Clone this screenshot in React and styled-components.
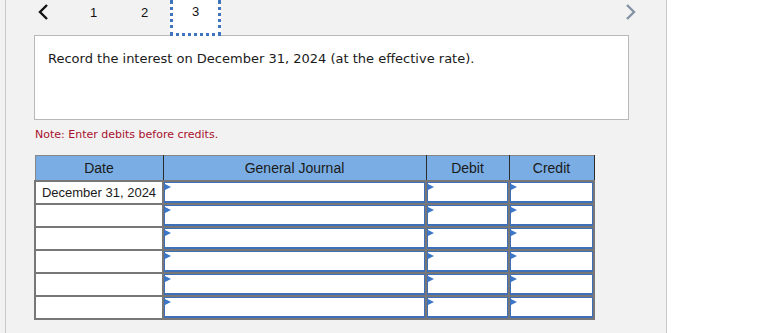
import React from "react";
import styled, { createGlobalStyle } from "styled-components";

const Global = createGlobalStyle`
  html, body {
    margin: 0;
    padding: 0;
    background: #ffffff;
  }
  body {
    font-family: "DejaVu Sans", Verdana, sans-serif;
  }
`;

const Page = styled.div`
  display: flex;
  min-height: 333px;
  background: #ffffff;
`;

const Gutter = styled.div`
  width: 5px;
  background: #f2f2f2;
`;

const Panel = styled.div`
  width: 662px;
  min-height: 333px;
  background: #f2f2f2;
  border-left: 1px solid #c9c9c9;
  border-right: 1px solid #c9c9c9;
  box-sizing: border-box;
`;

const NavBar = styled.div`
  display: flex;
  align-items: stretch;
  height: 35px;
  padding-left: 12px;
`;

const Arrow = styled.button`
  width: 50px;
  border: none;
  background: transparent;
  padding: 0 0 12px;
  display: flex;
  align-items: center;
  justify-content: center;
  color: ${(p) => (p.dim ? "#8592a5" : "#111")};
  margin-left: ${(p) => (p.right ? "auto" : "0")};
  margin-right: ${(p) => (p.right ? "10px" : "0")};
`;

const Tab = styled.div`
  width: 51px;
  display: flex;
  align-items: center;
  justify-content: center;
  padding-bottom: 10px;
  box-sizing: border-box;
  font-family: "Liberation Sans", Arial, sans-serif;
  font-size: 13px;
  color: #111;
  background: ${(p) => (p.active ? "#ffffff" : "transparent")};
  border: ${(p) => (p.active ? "3px dotted #3f75bf" : "none")};
  border-top: none;
  position: relative;
  z-index: 1;
  margin-bottom: ${(p) => (p.active ? "-1px" : "0")};
`;

const Question = styled.div`
  margin-left: 28px;
  width: 595px;
  height: 85px;
  box-sizing: border-box;
  background: #ffffff;
  border: 1px solid #b8b8b8;
  padding: 15px 13px;
  font-size: 13px;
  color: #1a1a1a;
`;

const Note = styled.div`
  margin: 8px 0 0 29px;
  font-size: 11px;
  color: #a8102d;
`;

const Journal = styled.table`
  margin: 14px 0 0 28px;
  border-collapse: collapse;
  font-family: "Liberation Sans", Arial, sans-serif;
  font-size: 13px;
  color: #1a1a1a;
`;

const Head = styled.th`
  width: ${(p) => p.w}px;
  height: 24px;
  padding: 0;
  font-size: 14px;
  font-weight: normal;
  background: #79ade3;
  border: 1px solid #2b2b2b;
  border-top-color: #888;
  border-left-color: ${(p) => (p.first ? "#888" : "#2b2b2b")};
`;

const Cell = styled.td`
  height: 21px;
  padding: 0;
  background: #ffffff;
  border: 2px solid #777;
  text-align: center;
`;

const InputCell = styled.td`
  padding: 0;
  border: 2px solid #777;
  height: 21px;
`;

const InputBox = styled.div`
  position: relative;
  height: 21px;
  box-sizing: border-box;
  background: #ffffff;
  border: 1px solid #3d70b8;
  border-bottom-width: 2px;
`;

const Flag = styled.span`
  position: absolute;
  left: 0;
  top: 1px;
  width: 0;
  height: 0;
  border-top: 3px solid transparent;
  border-bottom: 3px solid transparent;
  border-left: 6px solid #3d78c8;
`;

const Input = () => (
  <InputCell>
    <InputBox>
      <Flag />
    </InputBox>
  </InputCell>
);

const Chevron = ({ dir }) => (
  <svg width="12" height="18" viewBox="0 0 12 18">
    <path
      d={dir === "left" ? "M10 2 L3 9 L10 16" : "M2 2 L9 9 L2 16"}
      fill="none"
      stroke="currentColor"
      strokeWidth="2.4"
    />
  </svg>
);

const rows = ["December 31, 2024", "", "", "", "", ""];

const App = () => {
  return (
    <Page>
      <Global />
      <Gutter />
      <Panel>
        <NavBar>
          <Arrow>
            <Chevron dir="left" />
          </Arrow>
          <Tab>1</Tab>
          <Tab>2</Tab>
          <Tab active>3</Tab>
          <Arrow right dim>
            <Chevron dir="right" />
          </Arrow>
        </NavBar>
        <Question>
          Record the interest on December 31, 2024 (at the effective rate).
        </Question>
        <Note>Note: Enter debits before credits.</Note>
        <Journal>
          <thead>
            <tr>
              <Head first w={127}>Date</Head>
              <Head w={262}>General Journal</Head>
              <Head w={82}>Debit</Head>
              <Head w={84}>Credit</Head>
            </tr>
          </thead>
          <tbody>
            {rows.map((d, i) => (
              <tr key={i}>
                <Cell>{d}</Cell>
                <Input />
                <Input />
                <Input />
              </tr>
            ))}
          </tbody>
        </Journal>
      </Panel>
    </Page>
  );
};

export default App;
